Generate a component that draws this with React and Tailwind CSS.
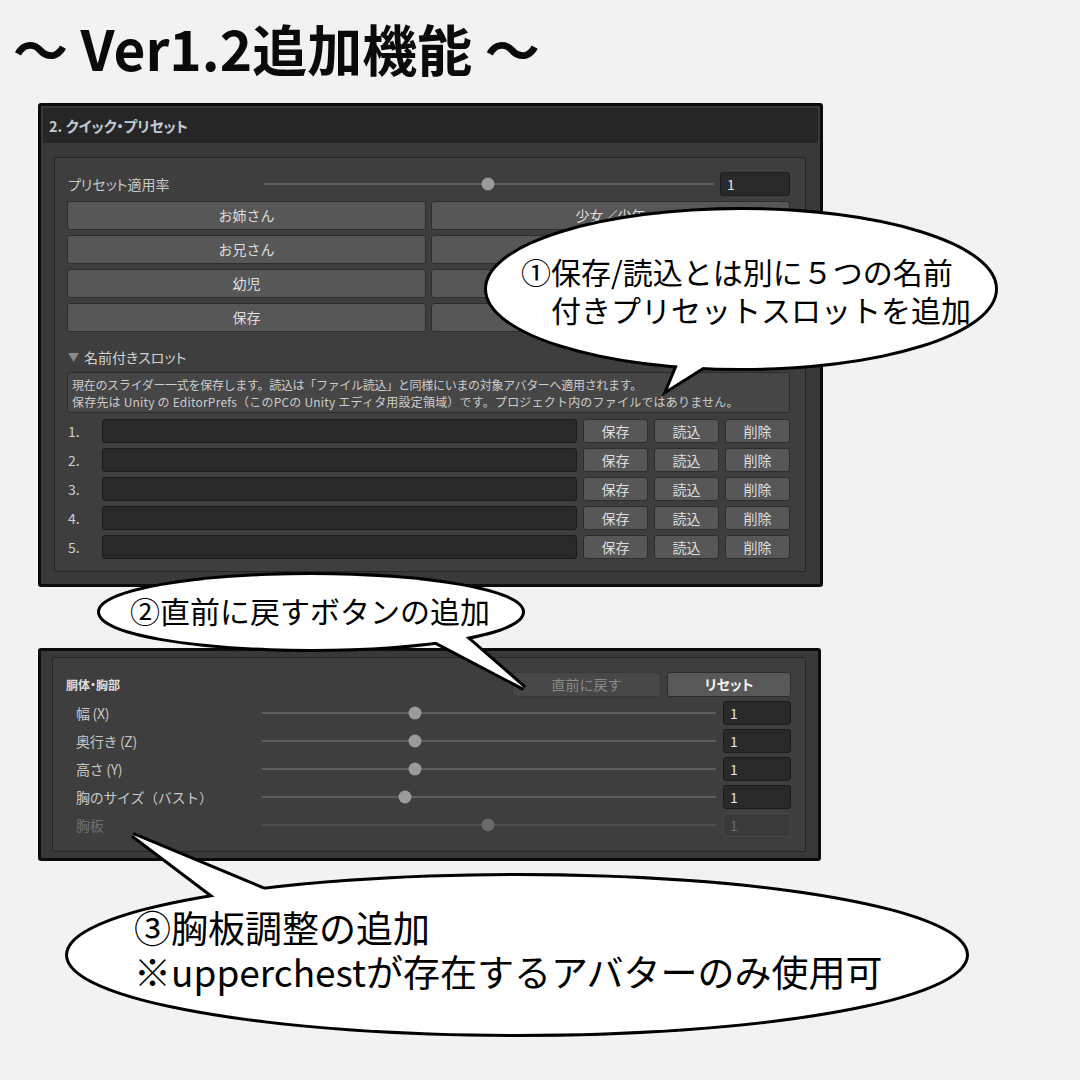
import React from "react";

function Slider({ pct, disabled }) {
  return (
    <div className="relative flex-1 h-full">
      <div
        className={
          disabled
            ? "absolute left-0 right-0 top-1/2 -translate-y-1/2 h-[2px] bg-[#4e4e4e]"
            : "absolute left-0 right-0 top-1/2 -translate-y-1/2 h-[2px] bg-[#5e5e5e]"
        }
      />
      <div
        className={
          disabled
            ? "absolute top-1/2 w-[13px] h-[13px] -translate-x-1/2 -translate-y-1/2 rounded-full bg-[#6a6a6a]"
            : "absolute top-1/2 w-[13px] h-[13px] -translate-x-1/2 -translate-y-1/2 rounded-full bg-[#9b9b9b]"
        }
        style={{ left: `${pct}%` }}
      />
    </div>
  );
}

function NumBox({ className, disabled }) {
  return (
    <div
      className={
        (disabled
          ? "bg-[#3a3a3a] border-[#484848] text-[#6c6c6c] "
          : "bg-[#292929] border-[#1b1b1b] text-[#e2e2e2] ") +
        "h-full border rounded-[3px] flex items-center pl-[6px] text-[14px] " +
        className
      }
    >
      1
    </div>
  );
}

function Btn({ children, className }) {
  return (
    <div
      className={
        "flex items-center justify-center bg-[#575757] border border-[#2d2d2d] rounded-[3px] text-[14px] text-[#dedede] " +
        className
      }
    >
      {children}
    </div>
  );
}

const presets = ["お姉さん", "少女／少年", "お兄さん", "", "幼児", "", "保存", ""];

const sliders = [
  { label: "幅 (X)", pct: 33.7 },
  { label: "奥行き (Z)", pct: 33.7 },
  { label: "高さ (Y)", pct: 33.7 },
  { label: "胸のサイズ（バスト）", pct: 31.5 },
  { label: "胸板", pct: 49.8, disabled: true },
];

function Panel1() {
  return (
    <div className="ml-[38px] w-[785px] h-[484px] border-[3px] border-[#0c0c0c] rounded-[3px] bg-[#393939] p-[2px] flex flex-col">
      <div className="h-[35px] shrink-0 bg-[#262626] flex items-center pl-[6px] text-[14.5px] font-bold text-[#c0cad4] [font-feature-settings:'palt']">
        2. クイック・プリセット
      </div>
      <div className="flex-1 pl-[11px] pr-[12px] pt-[14px] pb-[10px]">
        <div className="h-full border border-[#262626] bg-[#3e3e3e] rounded-[2px] pl-[12px] pr-[15px] pt-[14px] flex flex-col">
          <div className="flex h-[24px] items-center shrink-0">
            <div className="w-[197px] pl-[1px] text-[14px] text-[#c8c8c8] [font-feature-settings:'palt']">
              プリセット適用率
            </div>
            <Slider pct={49.8} />
            <NumBox className="ml-[6px] w-[70px]" />
          </div>
          <div className="mt-[5px] grid grid-cols-2 gap-[5px]">
            {presets.map((p, i) => (
              <Btn key={i} className="h-[29px]">
                {p}
              </Btn>
            ))}
          </div>
          <div className="mt-[14px] h-[22px] flex items-center text-[14px] text-[#d2d2d2]">
            <span className="text-[11px] text-[#8a8a8a] mr-[5px] pl-[1px]">▼</span>
            <span className="[font-feature-settings:'palt']">名前付きスロット</span>
          </div>
          <div className="mt-[4px] h-[41px] bg-[#464646] border border-[#2c2c2c] rounded-[3px] pl-[4px] pt-[3px] text-[12px] leading-[17px] text-[#cdcdcd] whitespace-nowrap overflow-hidden">
            <div className="tracking-[-0.3px]">現在のスライダー一式を保存します。読込は「ファイル読込」と同様にいまの対象アバターへ適用されます。</div>
            <div className="tracking-[0.2px]">保存先は Unity の EditorPrefs（このPCの Unity エディタ用設定領域）です。プロジェクト内のファイルではありません。</div>
          </div>
          <div className="mt-[6px] flex flex-col gap-[5px]">
            {[1, 2, 3, 4, 5].map((n) => (
              <div key={n} className="flex h-[24px] items-center">
                <div className="w-[35px] pl-[1px] text-[14px] text-[#cfcfcf]">{n}.</div>
                <div className="flex-1 h-full bg-[#292929] border border-[#1b1b1b] rounded-[3px]" />
                <Btn className="ml-[6px] w-[65px] h-full">保存</Btn>
                <Btn className="ml-[6px] w-[65px] h-full">読込</Btn>
                <Btn className="ml-[6px] w-[65px] h-full">削除</Btn>
              </div>
            ))}
          </div>
        </div>
      </div>
    </div>
  );
}

function Panel2() {
  return (
    <div className="ml-[38px] w-[783px] h-[213px] border-[3px] border-[#0c0c0c] rounded-[3px] bg-[#393939] pl-[11px] pr-[12px] pt-[6px] pb-[6px]">
      <div className="h-full border border-[#262626] bg-[#3e3e3e] rounded-[2px] pl-[13px] pr-[14px] pt-[14px] flex flex-col">
        <div className="flex h-[25px] items-center shrink-0">
          <div className="flex-1 text-[12px] font-bold text-[#dedede] [font-feature-settings:'palt']">胴体・胸部</div>
          <div className="w-[149px] h-full flex items-center justify-center bg-[#474747] border border-[#393939] rounded-[3px] text-[14px] text-[#8a8a8a]">
            直前に戻す
          </div>
          <div className="ml-[6px] w-[124px] h-full flex items-center justify-center bg-[#585858] border border-[#2c2c2c] rounded-[3px] text-[14px] font-bold text-[#f2f2f2] [font-feature-settings:'palt']">
            リセット
          </div>
        </div>
        <div className="mt-[4px] flex flex-col gap-[4px]">
          {sliders.map((s) => (
            <div key={s.label} className="flex h-[24px] items-center">
              <div
                className={
                  s.disabled
                    ? "w-[196px] pl-[10px] text-[14px] text-[#6e6e6e] tracking-[-0.3px]"
                    : "w-[196px] pl-[10px] text-[14px] text-[#c8c8c8] tracking-[-0.3px]"
                }
              >
                {s.label}
              </div>
              <Slider pct={s.pct} disabled={s.disabled} />
              <NumBox className="ml-[7px] w-[68px]" disabled={s.disabled} />
            </div>
          ))}
        </div>
      </div>
    </div>
  );
}

function Bubbles() {
  const shapes = [
    {
      e: { cx: 741, cy: 289, rx: 254, ry: 79 },
      t: "680,360 668,389 714,360",
    },
    {
      e: { cx: 311, cy: 612, rx: 211, ry: 37 },
      t: "425,636 524,688 462,634",
    },
    {
      e: { cx: 517, cy: 955, rx: 449, ry: 79 },
      t: "215,897 133,835 272,893",
    },
  ];
  return (
    <svg
      className="absolute left-0 top-0 pointer-events-none"
      width="1080"
      height="1080"
      viewBox="0 0 1080 1080"
    >
      {shapes.map((s, i) => (
        <g key={i}>
          <ellipse {...s.e} fill="#fff" stroke="#000" strokeWidth="6" />
          <polygon points={s.t} fill="#fff" stroke="#000" strokeWidth="6" strokeLinejoin="miter" />
          <ellipse {...s.e} fill="#fff" />
          <polygon points={s.t} fill="#fff" />
        </g>
      ))}
    </svg>
  );
}

export default function App() {
  return (
    <div className="relative w-[1080px] h-[1080px] overflow-hidden bg-[#f2f2f2] font-['Noto_Sans_CJK_JP','Noto_Sans',sans-serif]">
      <div className="pl-[13px] pt-[20px] h-[103px] text-[55px] leading-[55px] font-bold text-[#0a0a0a] whitespace-nowrap">
        〜 Ver1.2追加機能 〜
      </div>
      <Panel1 />
      <div className="h-[61px]" />
      <Panel2 />
      <Bubbles />
      <div className="absolute left-[521px] top-[252px] text-[30px] leading-[38px] text-black whitespace-nowrap">
        <div>①保存/読込とは別に５つの名前</div>
        <div>　付きプリセットスロットを追加</div>
      </div>
      <div className="absolute left-[130px] top-[591px] text-[30px] leading-[38px] text-black whitespace-nowrap">
        ②直前に戻すボタンの追加
      </div>
      <div className="absolute left-[134px] top-[905px] text-[37px] leading-[44px] text-black whitespace-nowrap">
        <div>③胸板調整の追加</div>
        <div>※upperchestが存在するアバターのみ使用可</div>
      </div>
    </div>
  );
}
